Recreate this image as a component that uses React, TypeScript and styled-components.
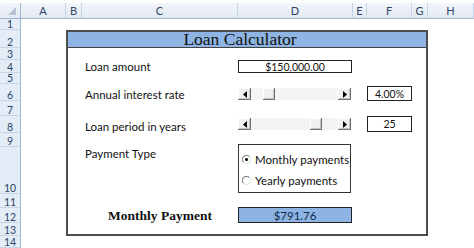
import React from "react";
import styled, { createGlobalStyle } from "styled-components";

const GlobalStyle = createGlobalStyle`
  html, body {
    margin: 0;
    padding: 0;
    background: #fff;
  }
  body {
    font-family: Lato, "Liberation Sans", sans-serif;
    color: #111;
  }
`;

// sheet geometry (px), H takes what is left
const columns = [
  { name: "A", width: 45 },
  { name: "B", width: 16 },
  { name: "C", width: 156 },
  { name: "D", width: 115 },
  { name: "E", width: 14 },
  { name: "F", width: 45 },
  { name: "G", width: 16 },
  { name: "H", width: 0 },
];
const rowHeights = [11, 18, 12, 13, 11, 17, 15, 17, 14, 47, 14, 15, 13, 12];

const loan = { amount: 150000, rate: 4, years: 25, monthly: true };

const monthlyPayment = () => {
  const r = loan.rate / 100 / 12;
  const n = loan.years * 12;
  return (loan.amount * r) / (1 - Math.pow(1 + r, -n));
};

const money = (v: number) =>
  "$" +
  v.toLocaleString("en-US", {
    minimumFractionDigits: 2,
    maximumFractionDigits: 2,
  });

const Sheet = styled.div`
  display: grid;
  grid-template-columns: 21px ${columns
      .map((c) => (c.width ? `${c.width}px` : "1fr"))
      .join(" ")};
  grid-template-rows: 16px ${rowHeights.map((h) => `${h}px`).join(" ")};
  padding-top: 3px;
  width: 474px;
  height: 248px;
  box-sizing: border-box;
  overflow: hidden;
`;

const Corner = styled.div`
  grid-row: 1;
  grid-column: 1;
  background: linear-gradient(#f3f6fa, #e2e9f3);
  border-right: 1px solid #9eb6ce;
  border-bottom: 1px solid #9eb6ce;
  display: flex;
  align-items: flex-end;
  justify-content: flex-end;
  padding: 0 4px 3px 0;
  box-sizing: border-box;
`;

const ColHeader = styled.div<{ $col: number }>`
  grid-row: 1;
  grid-column: ${(p) => p.$col};
  background: linear-gradient(#f3f6fa, #e2e9f3);
  border-right: 1px solid #c6d4e5;
  border-bottom: 1px solid #9eb6ce;
  box-sizing: border-box;
  display: flex;
  align-items: center;
  justify-content: center;
  font-size: 11px;
  color: #2f4468;
`;

const RowHeader = styled.div<{ $row: number }>`
  grid-column: 1;
  grid-row: ${(p) => p.$row};
  background: #e4ecf7;
  border-right: 1px solid #9eb6ce;
  border-bottom: 1px solid #c6d4e5;
  box-sizing: border-box;
  display: flex;
  align-items: flex-end;
  justify-content: center;
  font-size: 10.5px;
  line-height: 10px;
  color: #2f4468;
`;

const Panel = styled.section`
  grid-column: 3 / 9;
  grid-row: 3 / 15;
  border: 2px solid #4d4d4d;
  display: grid;
  grid-template-columns: 14px 156px 115px 14px 45px 14px;
  grid-template-rows: 16px 12px 13px 11px 17px 15px 17px 14px 47px 14px 15px 11px;
  min-height: 0;
`;

const TitleBar = styled.h1`
  grid-column: 1 / -1;
  grid-row: 1;
  margin: 0;
  background: #8db4e2;
  border-bottom: 1px solid #444;
  box-sizing: border-box;
  padding-right: 14px;
  text-align: center;
  font-family: "Liberation Serif", serif;
  font-weight: normal;
  font-size: 17.5px;
  line-height: 15px;
  color: #111;
`;

const Label = styled.div<{ $row: number; $align?: string }>`
  grid-column: 2;
  grid-row: ${(p) => p.$row};
  align-self: ${(p) => p.$align || "end"};
  padding-left: 3px;
  font-size: 11.5px;
  line-height: 13px;
  white-space: nowrap;
`;

const ResultLabel = styled.div`
  grid-column: 2;
  grid-row: 11;
  align-self: end;
  text-align: center;
  font-family: "Liberation Serif", serif;
  font-weight: bold;
  font-size: 13.5px;
  line-height: 15px;
  white-space: nowrap;
`;

const ValueBox = styled.div<{
  $row: number;
  $col: number;
  $height: number;
  $align?: string;
  $fill?: boolean;
}>`
  grid-column: ${(p) => p.$col};
  grid-row: ${(p) => p.$row};
  align-self: ${(p) => p.$align || "end"};
  height: ${(p) => p.$height}px;
  margin-right: ${(p) => (p.$col === 3 ? 1 : 0)}px;
  border: 1px solid #222;
  box-sizing: border-box;
  background: ${(p) => (p.$fill ? "#8db4e2" : "#fff")};
  color: ${(p) => (p.$fill ? "#0f2a4f" : "#111")};
  display: flex;
  align-items: center;
  justify-content: center;
  font-size: ${(p) => (p.$fill ? 11.5 : 10.5)}px;
`;

const ScrollBar = styled.div<{ $row: number; $align: string }>`
  grid-column: 3;
  grid-row: ${(p) => p.$row};
  align-self: ${(p) => p.$align};
  margin: ${(p) => (p.$align === "end" ? "0 2px 1px 0" : "2px 2px 0 0")};
  height: 12px;
  display: flex;
`;

const ArrowButton = styled.div`
  width: 13px;
  height: 12px;
  background: #f0f0f0;
  box-shadow: inset -1px -1px #707070, inset 1px 1px #fff,
    inset -2px -2px #c4c4c4;
  display: flex;
  align-items: center;
  justify-content: center;
  flex: none;
`;

const Track = styled.div`
  flex: 1;
  background: #f4f4f4;
  display: flex;
`;

const Thumb = styled.div<{ $pos: number }>`
  width: 12px;
  height: 12px;
  margin-left: calc((100% - 12px) * ${(p) => p.$pos});
  background: #f0f0f0;
  box-shadow: inset -1px -1px #707070, inset 1px 1px #fff,
    inset -2px -2px #c4c4c4;
`;

const GroupBox = styled.fieldset`
  grid-column: 3;
  grid-row: 8 / 10;
  align-self: end;
  height: 49px;
  margin: 0 2px 1px 0;
  padding: 4px 0 0 3px;
  border: 1px solid #333;
  box-sizing: border-box;
  display: flex;
  flex-direction: column;
`;

const Option = styled.label`
  display: flex;
  align-items: center;
  gap: 4px;
  height: 21px;
  font-size: 11.5px;
  white-space: nowrap;
`;

const Arrow = ({ dir }: { dir: "left" | "right" }) => (
  <svg width="4" height="7" viewBox="0 0 4 7">
    <path d={dir === "left" ? "M0 3.5L4 0V7Z" : "M4 3.5L0 0V7Z"} fill="#000" />
  </svg>
);

const Slider = ({
  row,
  align,
  pos,
}: {
  row: number;
  align: string;
  pos: number;
}) => (
  <ScrollBar $row={row} $align={align}>
    <ArrowButton>
      <Arrow dir="left" />
    </ArrowButton>
    <Track>
      <Thumb $pos={pos} />
    </Track>
    <ArrowButton>
      <Arrow dir="right" />
    </ArrowButton>
  </ScrollBar>
);

const Radio = ({ checked }: { checked: boolean }) => (
  <svg width="9" height="9" viewBox="0 0 12 12">
    <path
      d="M9.9 2.1A5.5 5.5 0 0 0 2.1 9.9"
      stroke="#7a7a7a"
      strokeWidth="1.4"
      fill="none"
    />
    <path
      d="M2.1 9.9A5.5 5.5 0 0 0 9.9 2.1"
      stroke="#e2e2e2"
      strokeWidth="1.4"
      fill="none"
    />
    {checked && <circle cx="6" cy="6" r="2" fill="#000" />}
  </svg>
);

const App = () => {
  return (
    <>
      <GlobalStyle />
      <Sheet>
        <Corner>
          <svg width="8" height="8" viewBox="0 0 8 8">
            <path d="M8 0V8H0Z" fill="#b4c2d4" />
          </svg>
        </Corner>
        {columns.map((c, i) => (
          <ColHeader key={c.name} $col={i + 2}>
            {c.name}
          </ColHeader>
        ))}
        {rowHeights.map((_, i) => (
          <RowHeader key={i} $row={i + 2}>
            {i + 1}
          </RowHeader>
        ))}

        <Panel>
          <TitleBar>Loan Calculator</TitleBar>

          <Label $row={3}>Loan amount</Label>
          <ValueBox $row={3} $col={3} $height={13}>
            {money(loan.amount)}
          </ValueBox>

          <Label $row={5}>Annual interest rate</Label>
          <Slider row={5} align="end" pos={0.16} />
          <ValueBox $row={5} $col={5} $height={15}>
            {loan.rate.toFixed(2)}%
          </ValueBox>

          <Label $row={7}>Loan period in years</Label>
          <Slider row={7} align="start" pos={0.79} />
          <ValueBox $row={7} $col={5} $height={16} $align="start">
            {loan.years}
          </ValueBox>

          <Label $row={9} $align="start">
            Payment Type
          </Label>
          <GroupBox>
            <Option>
              <Radio checked={loan.monthly} />
              Monthly payments
            </Option>
            <Option>
              <Radio checked={!loan.monthly} />
              Yearly payments
            </Option>
          </GroupBox>

          <ResultLabel>Monthly Payment</ResultLabel>
          <ValueBox $row={11} $col={3} $height={16} $fill>
            {money(monthlyPayment())}
          </ValueBox>
        </Panel>
      </Sheet>
    </>
  );
};

export default App;
